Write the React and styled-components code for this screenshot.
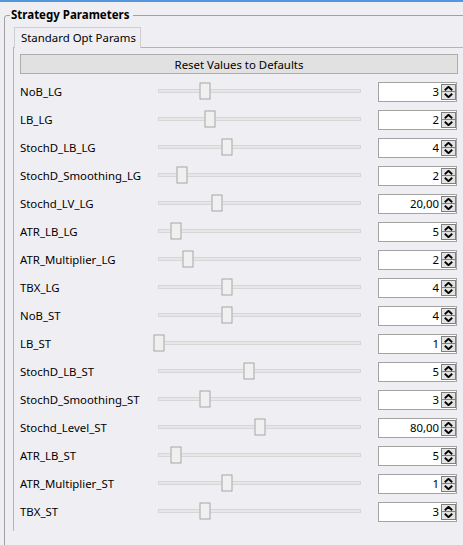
import React from "react";
import styled, { createGlobalStyle } from "styled-components";

const GlobalStyle = createGlobalStyle`
  html, body {
    margin: 0;
    padding: 0;
    background: #efeff3;
  }
  body {
    font-family: "Noto Sans", "Liberation Sans", Arial, sans-serif;
    font-size: 11.4px;
    color: #000;
  }
`;

const Window = styled.div`
  width: 463px;
  height: 545px;
  overflow: hidden;
  box-sizing: border-box;
  border-top: 2px solid #5297dc;
  background: #efeff3;
`;

const GroupBox = styled.fieldset`
  margin: 6px 0 0 4px;
  padding: 5px 0 0 8px;
  width: 480px;
  height: 560px;
  border: 1px solid #a0a0a0;
  border-radius: 3px;
`;

const GroupTitle = styled.legend`
  margin-left: -3px;
  padding: 0 4px 0 1px;
  font-weight: bold;
  font-size: 11.5px;
  line-height: 14px;
`;

const TabStrip = styled.div`
  display: flex;
  padding-left: 1px;
`;

const Tab = styled.div`
  position: relative;
  z-index: 1;
  box-sizing: border-box;
  width: 127px;
  height: 21px;
  margin-bottom: -1px;
  padding-left: 6px;
  line-height: 20px;
  border: 1px solid #cfcfcf;
  border-bottom: none;
  background: #efeff3;
`;

const TabPanel = styled.div`
  box-sizing: border-box;
  width: 452px;
  padding: 6px;
  border-top: 1px solid #b4b4b4;
  border-left: 1px solid #b4b4b4;
`;

const ResetButton = styled.button`
  display: block;
  box-sizing: border-box;
  width: 438px;
  height: 20px;
  margin: 0 0 3px 0;
  padding: 0;
  font: inherit;
  color: #000;
  background: #e1e1e1;
  border: 1px solid #adadad;
`;

const Row = styled.div`
  display: grid;
  grid-template-columns: 138px 203px 79px;
  align-items: center;
  height: 28px;
`;

const Label = styled.span`
  white-space: nowrap;
`;

const Track = styled.div`
  position: relative;
  box-sizing: border-box;
  height: 4px;
  background: #e7e7e7;
  border: 1px solid #d6d6d6;
`;

const Thumb = styled.div`
  position: absolute;
  top: 50%;
  box-sizing: border-box;
  width: 11px;
  height: 17px;
  transform: translate(-50%, -50%);
  background: #f0f0f0;
  border: 1px solid #a6a6a6;
`;

const SpinBox = styled.div`
  display: flex;
  box-sizing: border-box;
  width: 79px;
  height: 20px;
  margin: 2px 0 0 17px;
  background: #fff;
  border: 1px solid #a3a3a3;
`;

const SpinValue = styled.span`
  flex: 1;
  text-align: right;
  padding-right: 2px;
  line-height: 18px;
`;

const SpinButtons = styled.div`
  display: flex;
  flex-direction: column;
  width: 15px;
  padding: 1px 0;
`;

const SpinButton = styled.div`
  display: flex;
  align-items: center;
  justify-content: center;
  box-sizing: border-box;
  height: 8px;
  background: #e3e3e3;
  border: 1px solid #7f7f7f;
  & + & {
    border-top: none;
  }
`;

const Chevron = ({ down }) => (
  <svg width="9" height="5" viewBox="0 0 9 5">
    <polyline
      points={down ? "0.8,0.8 4.5,4.2 8.2,0.8" : "0.8,4.2 4.5,0.8 8.2,4.2"}
      fill="none"
      stroke="#000"
      strokeWidth="1.9"
    />
  </svg>
);

const params = [
  ["NoB_LG", 45.5, "3"],
  ["LB_LG", 50.5, "2"],
  ["StochD_LB_LG", 67.5, "4"],
  ["StochD_Smoothing_LG", 22.5, "2"],
  ["Stochd_LV_LG", 58, "20,00"],
  ["ATR_LB_LG", 17, "5"],
  ["ATR_Multiplier_LG", 29, "2"],
  ["TBX_LG", 67.5, "4"],
  ["NoB_ST", 67.5, "4"],
  ["LB_ST", 0, "1"],
  ["StochD_LB_ST", 90, "5"],
  ["StochD_Smoothing_ST", 45.5, "3"],
  ["Stochd_Level_ST", 101, "80,00"],
  ["ATR_LB_ST", 17, "5"],
  ["ATR_Multiplier_ST", 67.5, "1"],
  ["TBX_ST", 45.5, "3"],
];

export default function App() {
  return (
    <>
      <GlobalStyle />
      <Window>
        <GroupBox>
          <GroupTitle>Strategy Parameters</GroupTitle>
          <TabStrip>
            <Tab>Standard Opt Params</Tab>
          </TabStrip>
          <TabPanel>
            <ResetButton>Reset Values to Defaults</ResetButton>
            {params.map(([name, pos, value]) => (
              <Row key={name}>
                <Label>{name}</Label>
                <Track>
                  <Thumb style={{ left: pos }} />
                </Track>
                <SpinBox>
                  <SpinValue>{value}</SpinValue>
                  <SpinButtons>
                    <SpinButton>
                      <Chevron />
                    </SpinButton>
                    <SpinButton>
                      <Chevron down />
                    </SpinButton>
                  </SpinButtons>
                </SpinBox>
              </Row>
            ))}
          </TabPanel>
        </GroupBox>
      </Window>
    </>
  );
}
